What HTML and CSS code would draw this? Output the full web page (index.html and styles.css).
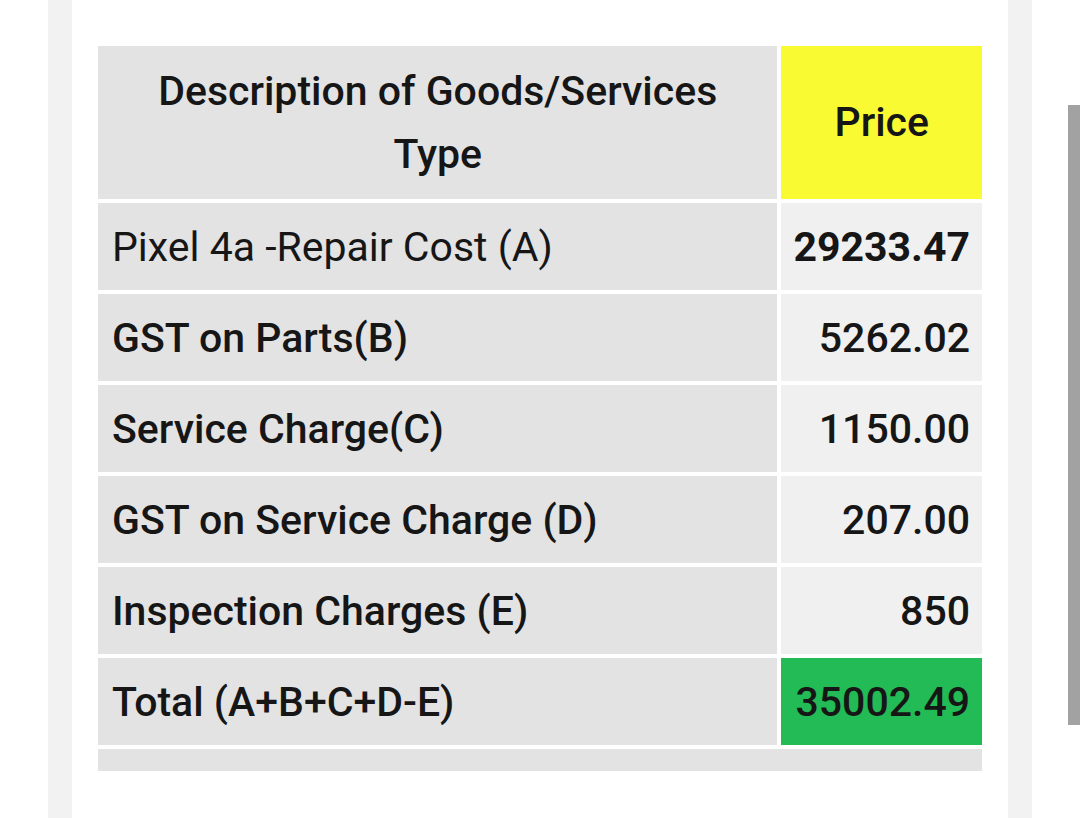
FILE: index.html
```html
<!doctype html>
<html lang="en">
<head>
    <meta charset="utf-8">
    <meta name="viewport" content="width=device-width, initial-scale=1">
    <title>Repair Estimate</title>
    <link rel="stylesheet" href="styles.css">
</head>
<body>

<div class="page">
    <div class="gutter"></div>
    <div class="rail"></div>

    <main class="content">
        <table class="estimate">
            <thead>
            <tr>
                <th class="desc">Description of Goods/Services<br>Type</th>
                <th class="price price-head">Price</th>
            </tr>
            </thead>
            <tbody>
            <tr>
                <td class="desc light">Pixel 4a -Repair Cost (A)</td>
                <td class="price strong">29233.47</td>
            </tr>
            <tr>
                <td class="desc">GST on Parts(B)</td>
                <td class="price">5262.02</td>
            </tr>
            <tr>
                <td class="desc">Service Charge(C)</td>
                <td class="price">1150.00</td>
            </tr>
            <tr>
                <td class="desc">GST on Service Charge (D)</td>
                <td class="price">207.00</td>
            </tr>
            <tr>
                <td class="desc">Inspection Charges (E)</td>
                <td class="price">850</td>
            </tr>
            <tr>
                <td class="desc">Total (A+B+C+D-E)</td>
                <td class="price price-total">35002.49</td>
            </tr>
            <tr>
                <td class="filler" colspan="2"></td>
            </tr>
            </tbody>
        </table>
    </main>

    <div class="rail"></div>
    <div class="side">
        <div class="scrollbar"></div>
    </div>
</div>

</body>
</html>
```

FILE: styles.css
```css
*, *:before, *:after {
    box-sizing: border-box;
    margin: 0;
    padding: 0;
}

body {
    font-family: Roboto, "Liberation Sans", sans-serif;
    background: #fff;
    color: #161616;
}

.page {
    display: flex;
    height: 818px;
    overflow: hidden;
}

.gutter {
    width: 48px;
}

.rail {
    width: 24px;
    background: #f2f2f2;
}

.content {
    width: 936px;
    padding: 42px 0 0 22px;
}

.side {
    flex: 1;
    display: flex;
    justify-content: flex-end;
    padding-top: 105px;
}

.scrollbar {
    width: 12px;
    height: 620px;
    background: #a2a2a2;
}

.estimate {
    border-collapse: separate;
    border-spacing: 4px;
    width: 892px;
}

.estimate th,
.estimate td {
    font-size: 41px;
    font-weight: 500;
    line-height: 46px;
}

.estimate th {
    height: 153px;
    line-height: 63px;
    text-align: center;
}

.estimate td {
    height: 87px;
}

.desc {
    width: 680px;
    padding: 0 14px;
    background: #e3e3e3;
    text-align: left;
}

.light {
    font-weight: 400 !important;
}

.price {
    padding: 0 12px;
    background: #f0f0f0;
    text-align: right;
}

.strong {
    font-weight: 700 !important;
}

.price-head {
    background: #fafa32;
}

.price-total {
    background: #22bb55;
}

.estimate td.filler {
    height: 22px;
    padding: 0;
    background: #e3e3e3;
}
```
